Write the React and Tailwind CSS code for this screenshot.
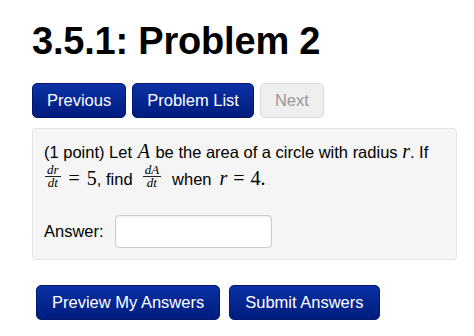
import React from 'react'

const sans = { fontFamily: '"Liberation Sans", Arial, sans-serif' }
const serif = { fontFamily: '"Liberation Serif", "Times New Roman", serif' }

// small stacked fraction like MathJax's d?/dt
function Frac({ num, den, className = '' }) {
  return (
    <span className={`inline-flex flex-col items-center align-[11px] text-[13px] leading-[10px] italic ${className}`} style={serif}>
      <span className="px-[2px]">{num}</span>
      <span className="w-full h-[1px] my-[1px] bg-[#222]" />
      <span className="px-[2px]">{den}</span>
    </span>
  )
}

// italic math variable
function M({ children, className = '' }) {
  return <span className={`italic text-[20px] ${className}`} style={serif}>{children}</span>
}

// upright math (numbers, operators)
function N({ children, className = '' }) {
  return <span className={`text-[20px] ${className}`} style={serif}>{children}</span>
}

function NavButton({ children, disabled = false, pad = 'px-[14px]' }) {
  if (disabled) {
    return (
      <span className={`h-[35px] flex items-center rounded-[5px] border border-[#dadada] bg-[#efefef] text-[#999999] text-[16.5px] ${pad}`}>
        {children}
      </span>
    )
  }
  return (
    <span className={`h-[35px] flex items-center rounded-[5px] border border-[#00196f] bg-gradient-to-b from-[#0d31a6] to-[#001c7e] text-white text-[16.5px] ${pad}`}>
      {children}
    </span>
  )
}

export default function App() {
  return (
    <div className="w-[474px] h-[336px] bg-white overflow-hidden text-black" style={sans}>
      <div className="pl-[32px] pt-[19px]">
        <h1 className="text-[38px] leading-[44px] font-bold tracking-[-0.2px]">3.5.1: Problem 2</h1>

        {/* navigation */}
        <div className="flex gap-[6px] mt-[20px]">
          <NavButton>Previous</NavButton>
          <NavButton>Problem List</NavButton>
          <NavButton disabled>Next</NavButton>
        </div>

        {/* problem body */}
        <div className="mt-[10px] w-[425px] bg-[#f5f5f5] border border-[#e3e3e3] rounded-[4px] pl-[11px] pr-[10px] pt-[12px] pb-[11px] text-[16.5px]">
          <div className="leading-[20px] whitespace-nowrap">
            (1 point) Let <M className="mx-[1px] text-[19px]">A</M> be the area of a circle with radius <M className="text-[19px]">r</M>. If
          </div>
          <div className="leading-[20px] mt-[3px] whitespace-nowrap">
            <Frac num="dr" den="dt" className="ml-[1px]" />
            <N className="ml-[8px]">=</N>
            <N className="ml-[7px]">5</N>
            <span>, find</span>
            <Frac num="dA" den="dt" className="ml-[10px]" />
            <span className="ml-[11px]">when</span>
            <M className="ml-[8px]">r</M>
            <N className="ml-[6px]">=</N>
            <N className="ml-[6px]">4.</N>
          </div>
          <div className="flex items-center mt-[26px]">
            <span>Answer:</span>
            <span className="ml-[11px] w-[157px] h-[33px] bg-white border border-[#cccccc] rounded-[4px] shadow-[inset_0_1px_2px_rgba(0,0,0,0.08)]" />
          </div>
        </div>

        {/* submit */}
        <div className="flex gap-[9px] mt-[25px] ml-[4px]">
          <NavButton pad="px-[15px]">Preview My Answers</NavButton>
          <NavButton pad="px-[15px]">Submit Answers</NavButton>
        </div>
      </div>
    </div>
  )
}
